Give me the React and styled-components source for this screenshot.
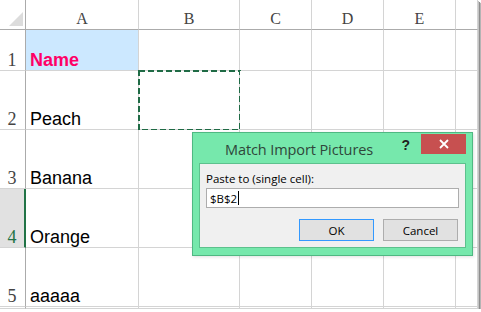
import styled, { createGlobalStyle } from "styled-components";

const GlobalStyle = createGlobalStyle`
  html, body {
    margin: 0;
    padding: 0;
    background: #ffffff;
  }
`;

const columns = ["A", "B", "C", "D", "E", ""];
const rows = [
  { n: 1, a: "Name", title: true },
  { n: 2, a: "Peach", marked: true },
  { n: 3, a: "Banana" },
  { n: 4, a: "Orange", selected: true },
  { n: 5, a: "aaaaa" },
  { n: 6, a: "", hidden: true },
];

export default function App() {
  return (
    <>
      <GlobalStyle />
      <Frame>
        <Sheet>
          <Corner>
            <Triangle />
          </Corner>
          {columns.map((c, i) => (
            <ColHead key={i}>{c}</ColHead>
          ))}
          {rows.map((r) => (
            <Row key={r.n} r={r} />
          ))}
        </Sheet>
        <Dialog>
          <TitleBar>
            <Title>Match Import Pictures</Title>
            <Help>?</Help>
            <Close>
              <svg width="10" height="10" viewBox="0 0 10 10">
                <path d="M1 1 L9 9 M9 1 L1 9" stroke="#fff" strokeWidth="1.8" />
              </svg>
            </Close>
          </TitleBar>
          <Panel>
            <Label>Paste to (single cell):</Label>
            <Input>
              $B$2<Caret />
            </Input>
            <Buttons>
              <Btn $focus>OK</Btn>
              <Btn>Cancel</Btn>
            </Buttons>
          </Panel>
        </Dialog>
      </Frame>
    </>
  );
}

function Row({ r }) {
  return (
    <>
      <RowHead $selected={r.selected}>{!r.hidden && r.n}</RowHead>
      {columns.map((c, i) => (
        <Cell key={i} $fill={i === 0 && r.title}>
          {i === 0 && r.a && <CellText $title={r.title}>{r.a}</CellText>}
          {i === 1 && r.marked && (
            <Marquee width="103" height="61" viewBox="0 0 103 61">
              <rect
                x="1"
                y="1"
                width="101"
                height="59"
                fill="none"
                stroke="#1f6b45"
                strokeWidth="2"
                strokeDasharray="6 3"
                shapeRendering="crispEdges"
              />
            </Marquee>
          )}
        </Cell>
      ))}
    </>
  );
}

const Frame = styled.div`
  position: relative;
  width: 478px;
  height: 309px;
  box-shadow: 1px 1px 0 #c4c4c4, 2px 2px 0 #8e8e8e, 3px 3px 1px #b4b4b4;
`;

const Sheet = styled.div`
  display: grid;
  grid-template-columns: 26px 113px 101px 72px 72px 72px 22px;
  grid-template-rows: 30px 41px repeat(4, 59px) 2px;
  width: 478px;
  height: 309px;
  overflow: hidden;
  background: #ffffff;
`;

const Corner = styled.div`
  box-sizing: border-box;
  border-right: 1px solid #ababab;
  border-bottom: 1px solid #ababab;
  position: relative;
`;

const Triangle = styled.div`
  position: absolute;
  left: 9px;
  top: 12px;
  width: 0;
  height: 0;
  border-left: 14px solid transparent;
  border-bottom: 14px solid #dcdcdc;
`;

const ColHead = styled.div`
  box-sizing: border-box;
  border-right: 1px solid #d4d4d4;
  border-bottom: 1px solid #ababab;
  display: flex;
  align-items: flex-end;
  justify-content: center;
  padding-bottom: 1px;
  font-family: "Liberation Serif", serif;
  font-size: 16px;
  line-height: 18px;
  color: #444444;
`;

const RowHead = styled.div`
  box-sizing: border-box;
  border-right: ${(p) => (p.$selected ? "2px solid #217346" : "1px solid #ababab")};
  border-bottom: 1px solid #d4d4d4;
  background: ${(p) => (p.$selected ? "#e1e1e1" : "#ffffff")};
  color: ${(p) => (p.$selected ? "#217346" : "#444444")};
  display: flex;
  align-items: flex-end;
  justify-content: center;
  padding: 0 ${(p) => (p.$selected ? "0" : "1px")} 0 0;
  font-family: "Liberation Serif", serif;
  font-size: 18px;
  line-height: 20px;
`;

const Cell = styled.div`
  box-sizing: border-box;
  position: relative;
  border-right: 1px solid #d4d4d4;
  border-bottom: 1px solid #d4d4d4;
  background: ${(p) => (p.$fill ? "#cce8ff" : "#ffffff")};
  display: flex;
  align-items: flex-end;
  padding: 0 0 0 4px;
`;

const CellText = styled.span`
  font-family: "Liberation Sans", Arial, sans-serif;
  font-size: 18px;
  font-weight: ${(p) => (p.$title ? 700 : 400)};
  color: ${(p) => (p.$title ? "#ff0066" : "#000000")};
  line-height: 20px;
`;

const Marquee = styled.svg`
  position: absolute;
  left: -1px;
  top: -1px;
`;

const Dialog = styled.div`
  position: absolute;
  left: 192px;
  top: 132px;
  width: 281px;
  height: 124px;
  box-sizing: border-box;
  background: #76e8ac;
  border: 1px solid #4fb882;
  box-shadow: 1px 1px 3px rgba(0, 0, 0, 0.12);
  display: flex;
  flex-direction: column;
  padding: 0 6px 7px 6px;
`;

const TitleBar = styled.div`
  height: 30px;
  display: flex;
  align-items: flex-start;
`;

const Title = styled.div`
  flex: 1;
  padding: 7px 0 0 26px;
  font-family: "Open Sans", sans-serif;
  font-size: 14.5px;
  color: #2f463a;
  letter-spacing: -0.1px;
`;

const Help = styled.div`
  font-family: "Liberation Sans", Arial, sans-serif;
  font-weight: 700;
  font-size: 14px;
  color: #1f1f1f;
  padding: 4px 11px 0 0;
`;

const Close = styled.div`
  margin-top: 1px;
  width: 45px;
  height: 20px;
  background: #c75050;
  display: flex;
  align-items: center;
  justify-content: center;
`;

const Panel = styled.div`
  flex: 1;
  background: #f0f0f0;
  border: 1px solid #5dc18d;
  padding: 7px 6px 0 6px;
  display: flex;
  flex-direction: column;
`;

const Label = styled.div`
  font-family: "Open Sans", sans-serif;
  font-size: 11.5px;
  color: #000000;
  line-height: 16px;
`;

const Input = styled.div`
  margin-top: 1px;
  height: 20px;
  width: 253px;
  box-sizing: border-box;
  background: #ffffff;
  border: 1px solid #adadad;
  display: flex;
  align-items: center;
  padding-left: 3px;
  font-family: "Open Sans", sans-serif;
  font-size: 11.5px;
  color: #000000;
`;

const Caret = styled.span`
  display: inline-block;
  width: 1px;
  height: 14px;
  margin-left: 1px;
  background: #000000;
`;

const Buttons = styled.div`
  display: flex;
  justify-content: flex-end;
  gap: 9px;
  margin-top: 11px;
  padding-right: 1px;
`;

const Btn = styled.div`
  width: 75px;
  height: 22px;
  box-sizing: border-box;
  background: #e1e1e1;
  border: 1px solid ${(p) => (p.$focus ? "#3399ff" : "#adadad")};
  display: flex;
  align-items: center;
  justify-content: center;
  font-family: "Open Sans", sans-serif;
  font-size: 11.5px;
  color: #000000;
`;
